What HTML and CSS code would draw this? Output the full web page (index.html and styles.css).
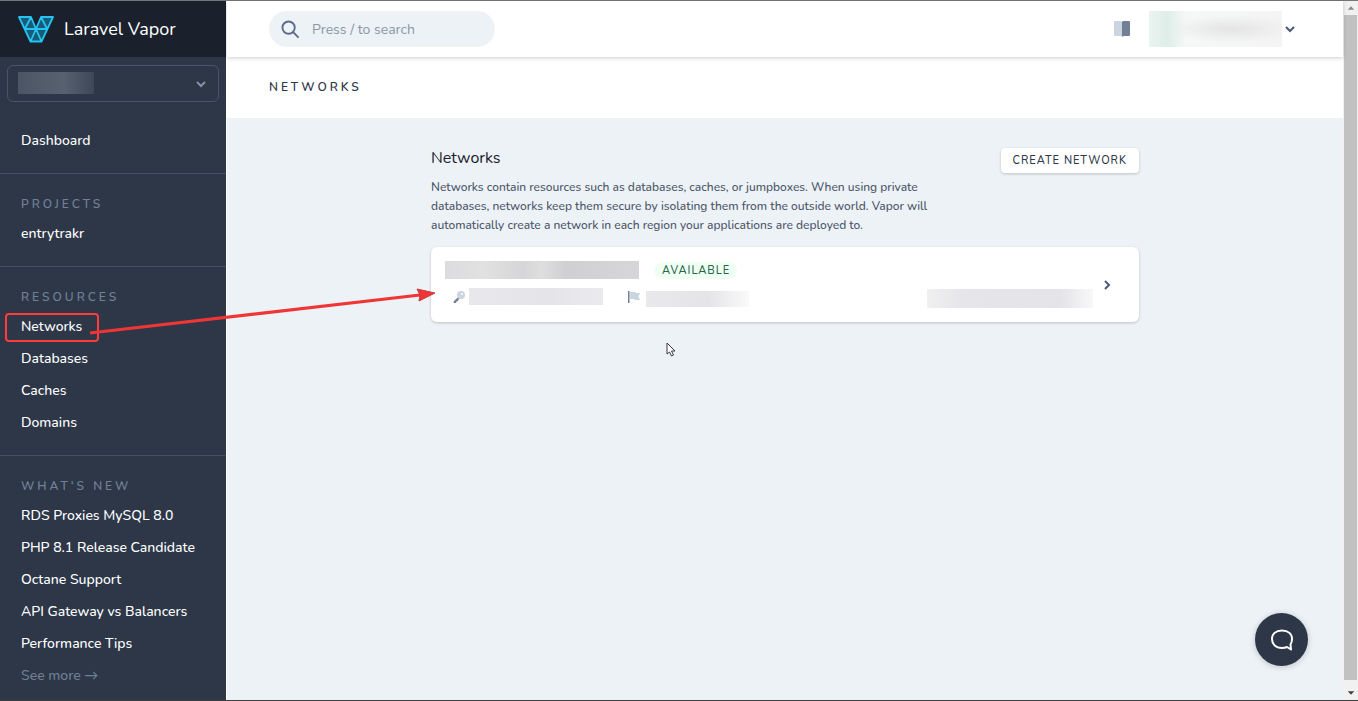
FILE: index.html
```html
<!DOCTYPE html>
<html lang="en">
<head>
<meta charset="utf-8">
<meta name="viewport" content="width=device-width, initial-scale=1">
<title>Networks - Laravel Vapor</title>
<link rel="stylesheet" href="styles.css">
</head>
<body>
<div class="app">
  <aside class="sidebar">
    <a class="brand" href="#">
      <svg class="brand-logo" viewBox="0 0 36 27" aria-hidden="true">
        <path d="M1 1h12l5 12 5-12h12L23.500 25.500h-11z" fill="#175c77"/>
        <path d="M1 1h12l5 12 5-12h12L23.500 25.500h-11zM13 1L6.800 13h22.400L23 1M12.500 25.500L18 13l5.500 12.500" fill="none" stroke="#25c4f2" stroke-width="1.800" stroke-linejoin="round"/>
      </svg>
      <span>Laravel Vapor</span>
    </a>
    <div class="team">
      <select class="team-select" aria-label="Team"><option></option></select>
      <span class="mask mask-team"></span>
      <svg class="chevron team-chevron" viewBox="0 0 10 10" aria-hidden="true"><path d="M1 3l4 4 4-4"/></svg>
    </div>
    <nav>
      <div class="group group-first"><a class="link" href="#">Dashboard</a></div>
      <div class="group">
        <h2 class="group-title">PROJECTS</h2>
        <a class="link" href="#">entrytrakr</a>
      </div>
      <div class="group">
        <h2 class="group-title">RESOURCES</h2>
        <a class="link marked" href="#">Networks</a>
        <a class="link" href="#">Databases</a>
        <a class="link" href="#">Caches</a>
        <a class="link" href="#">Domains</a>
      </div>
      <div class="group">
        <h2 class="group-title">WHAT'S NEW</h2>
        <a class="link" href="#">RDS Proxies MySQL 8.0</a>
        <a class="link" href="#">PHP 8.1 Release Candidate</a>
        <a class="link" href="#">Octane Support</a>
        <a class="link" href="#">API Gateway vs Balancers</a>
        <a class="link" href="#">Performance Tips</a>
        <a class="link link-more" href="#">See more →</a>
      </div>
    </nav>
  </aside>

  <div class="page">
    <header class="topbar">
      <label class="search">
        <svg class="search-icon" viewBox="0 0 20 20" aria-hidden="true"><circle cx="8" cy="8" r="6.500"/><path d="M12.800 12.800l5.700 5.700"/></svg>
        <input class="search-input" type="text" placeholder="Press / to search" aria-label="Search">
      </label>
      <div class="account">
        <a class="docs" href="#" aria-label="Documentation">
          <svg viewBox="0 0 16 16" aria-hidden="true"><path d="M0 1Q0 0 1 0h5q2 0 2 1v15q-1-1-2-1H1q-1 0-1-1z" fill="#cbd5e0"/><path d="M16 1q0-1-1-1h-5Q8 0 8 1v15q1-1 2-1h5q1 0 1-1z" fill="#718096"/></svg>
        </a>
        <button class="profile" type="button" aria-label="Account menu">
          <span class="mask mask-profile"></span>
          <svg class="chevron" viewBox="0 0 10 10" aria-hidden="true"><path d="M1 3l4 4 4-4"/></svg>
        </button>
      </div>
    </header>
    <div class="title-bar"><h1 class="title">NETWORKS</h1></div>
    <main class="content">
      <div class="intro">
        <div class="intro-text">
          <h2 class="intro-title">Networks</h2>
          <p class="intro-copy">Networks contain resources such as databases, caches, or jumpboxes. When using private databases, networks keep them secure by isolating them from the outside world. Vapor will automatically create a network in each region your applications are deployed to.</p>
        </div>
        <button class="create" type="button">CREATE NETWORK</button>
      </div>
      <a class="card" href="#" aria-label="Network details">
        <span class="card-main">
          <span class="card-row">
            <span class="mask mask-name"></span>
            <span class="badge">AVAILABLE</span>
          </span>
          <span class="card-row card-meta">
            <svg class="key" viewBox="0 0 12 12" aria-hidden="true"><path d="M6 5.500L.7 10.300V12H3l.6-1.500L5 10l.5-1.500L7 7.500z" fill="#718096"/><path d="M8 0a4 4 0 1 1 0 8 4 4 0 0 1 0-8zm1 2a1 1 0 1 0 0 2 1 1 0 0 0 0-2z" fill="#cbd5e0" fill-rule="evenodd"/></svg>
            <span class="mask mask-id"></span>
            <svg class="flag" viewBox="0 0 12 12" aria-hidden="true"><path d="M2 1h5l1 1h4l-1.500 3.500L12 9H7L6 8H2z" fill="#cbd5e0"/><path d="M0 0h1.500v12H0z" fill="#718096"/></svg>
            <span class="mask mask-region"></span>
            <span class="mask mask-date"></span>
          </span>
        </span>
        <svg class="chevron card-chevron" viewBox="0 0 10 10" aria-hidden="true"><path d="M3 1l4 4-4 4"/></svg>
      </a>
    </main>
  </div>

  <div class="scrollbar" aria-hidden="true">
    <svg class="scroll-arrow" viewBox="0 0 15 14"><path d="M4 9h7L7.500 5z" fill="#8b8b8b"/></svg>
    <div class="scroll-thumb"></div>
    <svg class="scroll-arrow scroll-down" viewBox="0 0 15 14"><path d="M4 5h7L7.500 9z" fill="#404040"/></svg>
  </div>

  <button class="chat" type="button" aria-label="Open chat">
    <svg viewBox="0 0 24 22" aria-hidden="true"><path d="M20.500 15.500c1-1.500 1.500-3 1.500-5.500 0-5-3.500-8.500-10-8.500S2 5 2 10s3.500 9 10 9c2 0 3.500-.3 5-1l4 2.500z"/></svg>
  </button>
  <svg class="arrow" viewBox="0 0 350 50" aria-hidden="true"><path d="M2 47L332 9" stroke="#f03535" stroke-width="3"/><path d="M347 7L329 3l3 6-1 6z" fill="#f03535" stroke="#c43c40" stroke-width="1"/></svg>
  <svg class="cursor" viewBox="0 0 10 16" aria-hidden="true"><path d="M1 1v11l2.500-2L5.500 14l2-1-2-4H9z" fill="#fff" stroke="#33384a"/></svg>
</div>
</body>
</html>
```
FILE: styles.css
```css
*, *::before, *::after { box-sizing: border-box; }

body {
  margin: 0;
  font-family: Nunito, Lato, "Open Sans", sans-serif;
  font-size: 14px;
  color: #4a5568;
  background: #edf2f7;
}

h1, h2, p { margin: 0; font-weight: 400; }
a { color: inherit; text-decoration: none; }
button { font: inherit; color: inherit; border: 0; cursor: pointer; }
svg { display: block; flex: none; }

.app {
  position: relative;
  display: flex;
  min-height: 100vh;
  border-top: 1px solid #76767a;
  border-bottom: 1px solid #3d3d40;
}

/* Sidebar */
.sidebar { flex: none; width: 227px; background: #2d3748; border-right: 1px solid #fff; }
.brand {
  display: flex;
  align-items: center;
  gap: 10px;
  height: 56px;
  padding-left: 18px;
  background: #1a202c;
  color: #fff;
  font-size: 18px;
}
.brand-logo { width: 36px; height: 27px; }
.team { position: relative; height: 37px; margin: 8px 7px 23px; }
.team-select {
  appearance: none;
  width: 100%;
  height: 100%;
  border: 1px solid #4a5568;
  border-radius: 6px;
  background: transparent;
}
.chevron { width: 10px; height: 10px; fill: none; stroke: #4a5a7a; stroke-width: 2; }
.team-chevron { position: absolute; right: 13px; top: 14px; stroke: #8391a7; }
.group { padding: 16px 0 16px 21px; border-top: 1px solid #455062; }
.group-first { padding-top: 0; border-top: 0; }
.group-title {
  font-size: 12px;
  line-height: 28px;
  letter-spacing: 3px;
  font-weight: 600;
  color: #718096;
}
.group:last-child { padding-bottom: 0; }
.link { display: block; position: relative; line-height: 32px; font-weight: 500; color: #fff; }
.link-more { color: #718096; }
.marked::after {
  content: "";
  position: absolute;
  left: -16px;
  top: 2px;
  width: 94px;
  height: 29px;
  border: 2px solid #ff3b3b;
  border-radius: 4px;
}

/* Blurred values */
.mask { display: block; flex: none; }
.mask-team { position: absolute; left: 11px; top: 7px; width: 76px; height: 22px; background: linear-gradient(90deg, #4c5563, #586170 60%, #3d4757); }
.mask-profile { width: 133px; height: 36px; background: radial-gradient(ellipse at 62% 50%, #e4e4e5, rgba(244, 244, 245, 0) 55%), linear-gradient(90deg, #eaf3f0, #deeee9 14%, #f6f8f8 28%, #f4f4f5); }
.mask-name { width: 194px; height: 18px; background: linear-gradient(90deg, #dcdcde, #e1e1e2 20%, #d6d6d8 40%, #dededf 50%, #d0d0d3 62%, #d6d6d8); }
.mask-id { width: 134px; height: 17px; margin: 0 25px 0 4px; background: linear-gradient(90deg, #e8e8ec, #e4e4e9 60%, #eaeaee); }
.mask-region { width: 103px; height: 16px; margin: 4px 0 0 6px; background: linear-gradient(90deg, #e9e9ec, #e4e4e9 60%, #fafafa); }
.mask-date { width: 166px; height: 19px; margin: 4px 0 0 auto; background: linear-gradient(90deg, #f0f0f1, #e6e6ea 20%, #e3e3e8 80%, #f8f8f9); }

/* Main column */
.page { flex: 1; min-width: 0; }
.topbar {
  position: relative;
  display: flex;
  align-items: center;
  justify-content: space-between;
  height: 56px;
  padding: 0 48px 0 42px;
  background: #fff;
  box-shadow: 0 1px 4px rgba(0, 0, 0, .2);
}
.search {
  display: flex;
  align-items: center;
  gap: 12px;
  width: 226px;
  height: 36px;
  padding: 0 12px;
  border-radius: 18px;
  background: #edf2f7;
}
.search-icon { width: 19px; height: 19px; fill: none; stroke: #5b6b88; stroke-width: 2; }
.search-input { flex: 1; min-width: 0; padding: 0; border: 0; outline: 0; background: none; font: inherit; }
.search-input::placeholder { color: #8b96a5; opacity: 1; }
.account { display: flex; align-items: center; gap: 19px; }
.docs svg { width: 16px; height: 16px; }
.profile { display: flex; align-items: center; gap: 3px; padding: 0; background: none; }
.title-bar { padding: 0 42px; background: #fff; }
.title { font-size: 12px; line-height: 61px; letter-spacing: 3px; font-weight: 600; color: #2d3748; }

.content { max-width: 756px; margin: 0 auto; padding: 28px 24px; }
.intro { display: flex; justify-content: space-between; align-items: flex-start; }
.intro-text { max-width: 510px; }
.intro-title { font-size: 16px; line-height: 25px; color: #1a202c; }
.intro-copy { margin-top: 7px; font-size: 12px; line-height: 19px; font-weight: 500; }
.create {
  flex: none;
  margin-top: 2px;
  padding: 0 12px;
  border-radius: 4px;
  background: #fff;
  color: #2d3748;
  font-size: 11px;
  font-weight: 500;
  line-height: 25px;
  letter-spacing: 1px;
  box-shadow: 0 1px 3px rgba(0, 0, 0, .2);
}
.card {
  display: flex;
  align-items: center;
  margin-top: 12px;
  height: 75px;
  padding: 0 27px 0 14px;
  border-radius: 6px;
  background: #fff;
  box-shadow: 0 1px 3px rgba(0, 0, 0, .2);
}
.card-main { flex: 1; min-width: 0; }
.card-row { display: flex; align-items: center; }
.badge {
  margin-left: 15px;
  padding: 0 7px 0 8px;
  border-radius: 9px;
  background: #f0fff4;
  color: #276749;
  font-size: 11px;
  font-weight: 500;
  line-height: 17px;
  letter-spacing: 1px;
}
.card-meta { margin-top: 6px; padding-left: 8px; }
.key, .flag { width: 12px; height: 12px; }
.card-chevron { margin-left: 9px; }

/* Window scrollbar */
.scrollbar { display: flex; flex-direction: column; flex: none; width: 15px; padding-left: 1px; background: #f1f1f1; }
.scroll-arrow { width: 14px; height: 14px; }
.scroll-thumb { flex: 1; margin-right: 1px; background: #c1c1c1; }
.scroll-down { margin-top: 6px; }

/* Floating items */
.chat {
  position: fixed;
  right: 50px;
  bottom: 35px;
  display: flex;
  align-items: center;
  justify-content: center;
  width: 53px;
  height: 53px;
  padding: 0;
  border-radius: 50%;
  background: #2d3748;
  box-shadow: 0 1px 6px rgba(0, 0, 0, .2);
}
.chat svg { width: 24px; height: 22px; fill: none; stroke: #fff; stroke-width: 2; stroke-linejoin: round; }
.arrow { position: absolute; left: 88px; top: 285px; width: 350px; height: 50px; fill: none; pointer-events: none; }
.cursor { position: absolute; left: 666px; top: 341px; width: 10px; height: 16px; pointer-events: none; }
```
